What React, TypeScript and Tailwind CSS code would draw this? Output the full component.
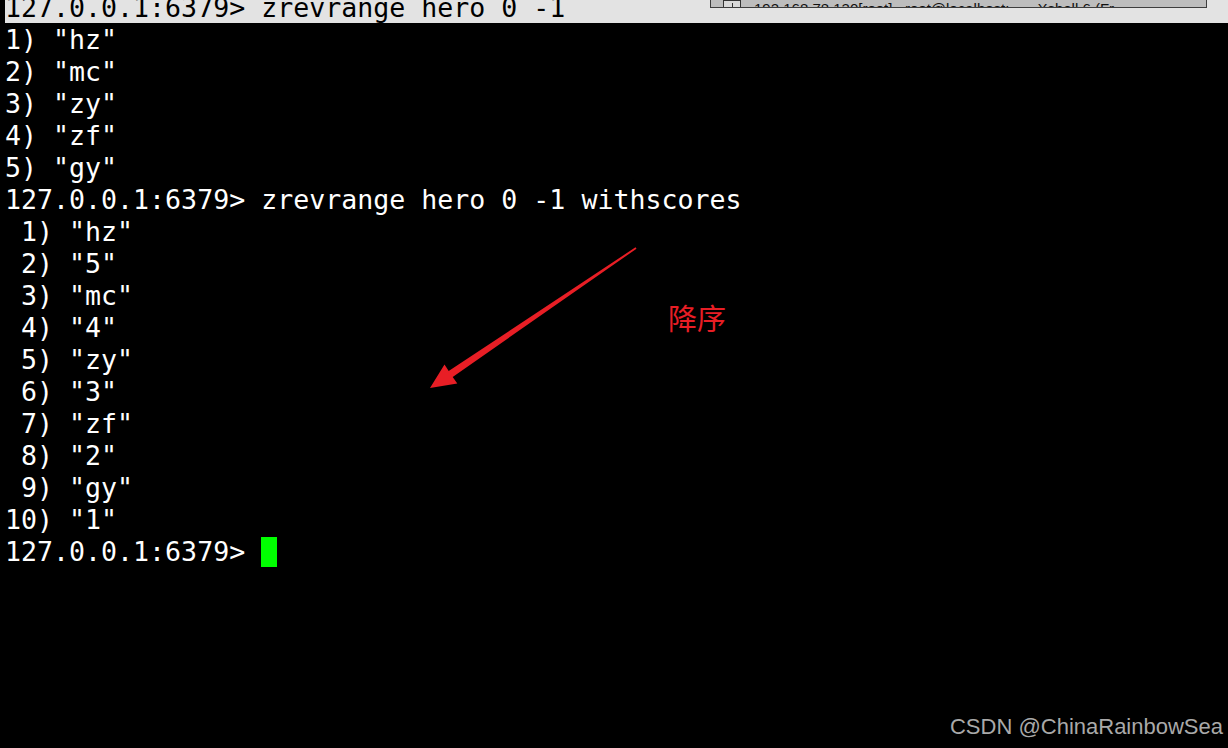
import React from 'react'

const mono = { fontFamily: '"DejaVu Sans Mono", "Liberation Mono", monospace' }

const firstBlock = ['1) "hz"', '2) "mc"', '3) "zy"', '4) "zf"', '5) "gy"']
const secondBlock = [
  ' 1) "hz"',
  ' 2) "5"',
  ' 3) "mc"',
  ' 4) "4"',
  ' 5) "zy"',
  ' 6) "3"',
  ' 7) "zf"',
  ' 8) "2"',
  ' 9) "gy"',
  '10) "1"',
]

function Line({ children }: { children: React.ReactNode }) {
  return <div className="h-[32px] whitespace-pre pl-[5px]">{children}</div>
}

export default function App() {
  return (
    <div className="relative h-[748px] w-full overflow-hidden bg-black">
      <div className="-mt-[8px] text-[26.6px] leading-[32px] text-white" style={mono}>
        <div className="ml-[5px] h-[31px] whitespace-pre bg-[#e3e3e3] text-black">127.0.0.1:6379&gt; zrevrange hero 0 -1</div>
        <div className="h-px" />
        {firstBlock.map((l) => (
          <Line key={l}>{l}</Line>
        ))}
        <Line>127.0.0.1:6379&gt; zrevrange hero 0 -1 withscores</Line>
        {secondBlock.map((l) => (
          <Line key={l}>{l}</Line>
        ))}
        <Line>
          127.0.0.1:6379&gt;{' '}
          <span className="inline-block h-[30px] w-[16px] bg-[#00ff00] align-[-6px]" />
        </Line>
      </div>

      {/* tooltip of the window title, cut by the top edge */}
      <div
        className="absolute left-[710px] top-0 flex h-[8px] w-[497px] items-end overflow-hidden border-x border-b border-[#3d3d3d] bg-[#bdbdbd] text-[15px] leading-none text-[#111]"
        style={{ fontFamily: '"Liberation Sans", Arial, sans-serif' }}
      >
        <div className="relative top-[3px] ml-[12px] h-[10px] w-[18px] border border-[#333] bg-[#d9d9d9]">
          <div className="mx-auto mt-[2px] h-[6px] w-px bg-[#333]" />
        </div>
        <span className="relative top-[9px] ml-[13px] whitespace-pre">192.168.78.130[root]   root@localhost:</span>
        <span className="relative top-[9px] ml-[28px] whitespace-pre">Xshell 6 (Fr</span>
        <span className="relative top-[3px] ml-[44px] h-[2px] w-[8px] bg-[#111]" />
      </div>

      {/* red annotation arrow */}
      <svg className="absolute left-0 top-0" width="1228" height="748" viewBox="0 0 1228 748">
        <polygon
          points="635.5,247.3 448.7,371.1 444.5,364.5 430,388 457.3,383.5 452.7,376.9 636.5,248.7"
          fill="#e81e25"
        />
      </svg>
      <div
        className="absolute left-[668px] top-[303px] text-[29px] leading-none text-[#e81e25]"
        style={{ fontFamily: '"Noto Sans CJK SC", "Noto Sans", sans-serif' }}
      >
        降序
      </div>

      {/* watermark */}
      <div
        className="absolute right-[5px] top-[716px] text-[22px] leading-[22px] text-[#a9a9a9]"
        style={{ fontFamily: '"Liberation Sans", Arial, sans-serif' }}
      >
        CSDN @ChinaRainbowSea
      </div>
    </div>
  )
}
